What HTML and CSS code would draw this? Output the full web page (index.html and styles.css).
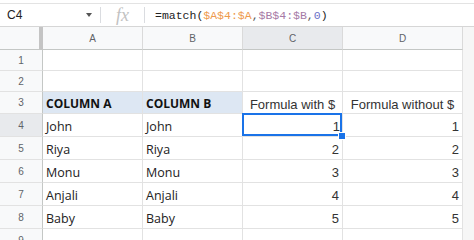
FILE: index.html
```html
<!DOCTYPE html>
<html lang="en">
<head>
  <meta charset="UTF-8" />
  <title>MATCH with and without $</title>
  <link rel="stylesheet" href="styles.css">
</head>
<body>
  <div class="formula-bar">
    <div class="name-box"><span>C4</span><span class="caret"></span></div>
    <div class="sep"></div>
    <div class="fx">fx</div>
    <div class="sep"></div>
    <div class="formula"><span>=match(</span><span class="r1">$A$4:$A</span><span class="punct">,</span><span class="r2">$B$4:$B</span><span class="punct">,</span><span class="r3">0</span><span>)</span></div>
  </div>

  <div class="sheet">
    <div class="corner"></div>
    <div class="col-h">A</div>
    <div class="col-h">B</div>
    <div class="col-h active">C</div>
    <div class="col-h">D</div>

    <div class="row-h">1</div><div class="cell"></div><div class="cell"></div><div class="cell"></div><div class="cell"></div>
    <div class="row-h">2</div><div class="cell"></div><div class="cell"></div><div class="cell"></div><div class="cell"></div>

    <div class="row-h">3</div>
    <div class="cell head">COLUMN A</div>
    <div class="cell head">COLUMN B</div>
    <div class="cell title">Formula with $</div>
    <div class="cell title">Formula without $</div>

    <div class="row-h active">4</div>
    <div class="cell name">John</div><div class="cell name">John</div>
    <div class="cell num selected">1<span class="handle"></span></div><div class="cell num">1</div>

    <div class="row-h">5</div>
    <div class="cell name">Riya</div><div class="cell name">Riya</div>
    <div class="cell num">2</div><div class="cell num">2</div>

    <div class="row-h">6</div>
    <div class="cell name">Monu</div><div class="cell name">Monu</div>
    <div class="cell num">3</div><div class="cell num">3</div>

    <div class="row-h">7</div>
    <div class="cell name">Anjali</div><div class="cell name">Anjali</div>
    <div class="cell num">4</div><div class="cell num">4</div>

    <div class="row-h">8</div>
    <div class="cell name">Baby</div><div class="cell name">Baby</div>
    <div class="cell num">5</div><div class="cell num">5</div>

    <div class="row-h">9</div><div class="cell"></div><div class="cell"></div><div class="cell"></div><div class="cell"></div>
  </div>
</body>
</html>
```

FILE: styles.css
```css
body {
  margin: 0;
  background: #fff;
  font-family: "Liberation Sans", Arial, sans-serif;
  color: #333;
  overflow: hidden;
}

/* formula bar */
.formula-bar {
  margin-top: 3px;
  height: 24px;
  box-sizing: border-box;
  border-top: 1px solid #e3e3e3;
  border-bottom: 1px solid #d6d6d6;
  display: flex;
  align-items: center;
}
.name-box {
  width: 100px;
  box-sizing: border-box;
  padding: 0 8px 0 7px;
  display: flex;
  align-items: center;
  justify-content: space-between;
  font-size: 12px;
  color: #222;
}
.caret {
  width: 0;
  height: 0;
  border-left: 3px solid transparent;
  border-right: 3px solid transparent;
  border-top: 4px solid #555;
}
.sep {
  width: 1px;
  height: 16px;
  background: #dadce0;
}
.fx {
  width: 43px;
  text-align: center;
  font-family: "Liberation Serif", serif;
  font-style: italic;
  font-size: 18px;
  color: #c2c2c2;
  line-height: 20px;
}
.formula {
  padding-left: 10px;
  font-family: "Liberation Mono", monospace;
  font-size: 11.5px;
  color: #222;
}
.formula .r1 { color: #ee9a4d; }
.formula .r2 { color: #a67aa6; }
.formula .r3 { color: #6a6fc8; }
.formula .punct { color: #555; }

/* grid */
.sheet {
  display: grid;
  grid-template-columns: 43px 100px 100px 100px 120px;
  grid-template-rows: 23px 21px 21px 22px repeat(5, 23px) 23px;
  background: #f6f6f6;
}
.sheet > div {
  box-sizing: border-box;
  border-right: 1px solid #e2e2e2;
  border-bottom: 1px solid #e2e2e2;
  background: #fff;
  display: flex;
  align-items: center;
  overflow: hidden;
  white-space: nowrap;
}
.sheet > .corner {
  background: #f8f9fa;
  border-right: 4px solid #c4c4c4;
  border-bottom: 1px solid #c4c7c5;
}
.sheet > .col-h {
  background: #f8f9fa;
  justify-content: center;
  font-size: 10px;
  color: #5f6368;
  border-bottom: 1px solid #c4c7c5;
  border-right: 1px solid #dadada;
}
.sheet > .row-h {
  background: #f8f9fa;
  justify-content: center;
  font-size: 10px;
  color: #5f6368;
  border-right: 1px solid #c4c7c5;
}
.sheet > .active {
  background: #e8eaed;
}
.sheet > .head {
  background: #dde7f3;
  font-family: "Open Sans", sans-serif;
  font-weight: bold;
  font-size: 12px;
  color: #111;
  padding: 1px 0 0 3px;
}
.sheet > .title {
  justify-content: center;
  font-size: 13px;
  color: #333;
  padding-top: 3px;
}
.sheet > .name {
  font-family: "Open Sans", sans-serif;
  font-size: 12.5px;
  color: #222;
  padding: 2px 0 0 3px;
}
.sheet > .num {
  justify-content: flex-end;
  font-size: 13px;
  color: #333;
  padding: 3px 3px 0 0;
}
.sheet > .selected {
  position: relative;
  overflow: visible;
  box-shadow: inset 0 0 0 2px #1a73e8;
  margin: -1px 0 0 -1px;
  width: calc(100% + 1px);
  height: calc(100% + 1px);
  padding-right: 2px;
}
.handle {
  position: absolute;
  right: -4px;
  bottom: -4px;
  width: 6px;
  height: 6px;
  background: #1a73e8;
  border: 1px solid #fff;
}
```
